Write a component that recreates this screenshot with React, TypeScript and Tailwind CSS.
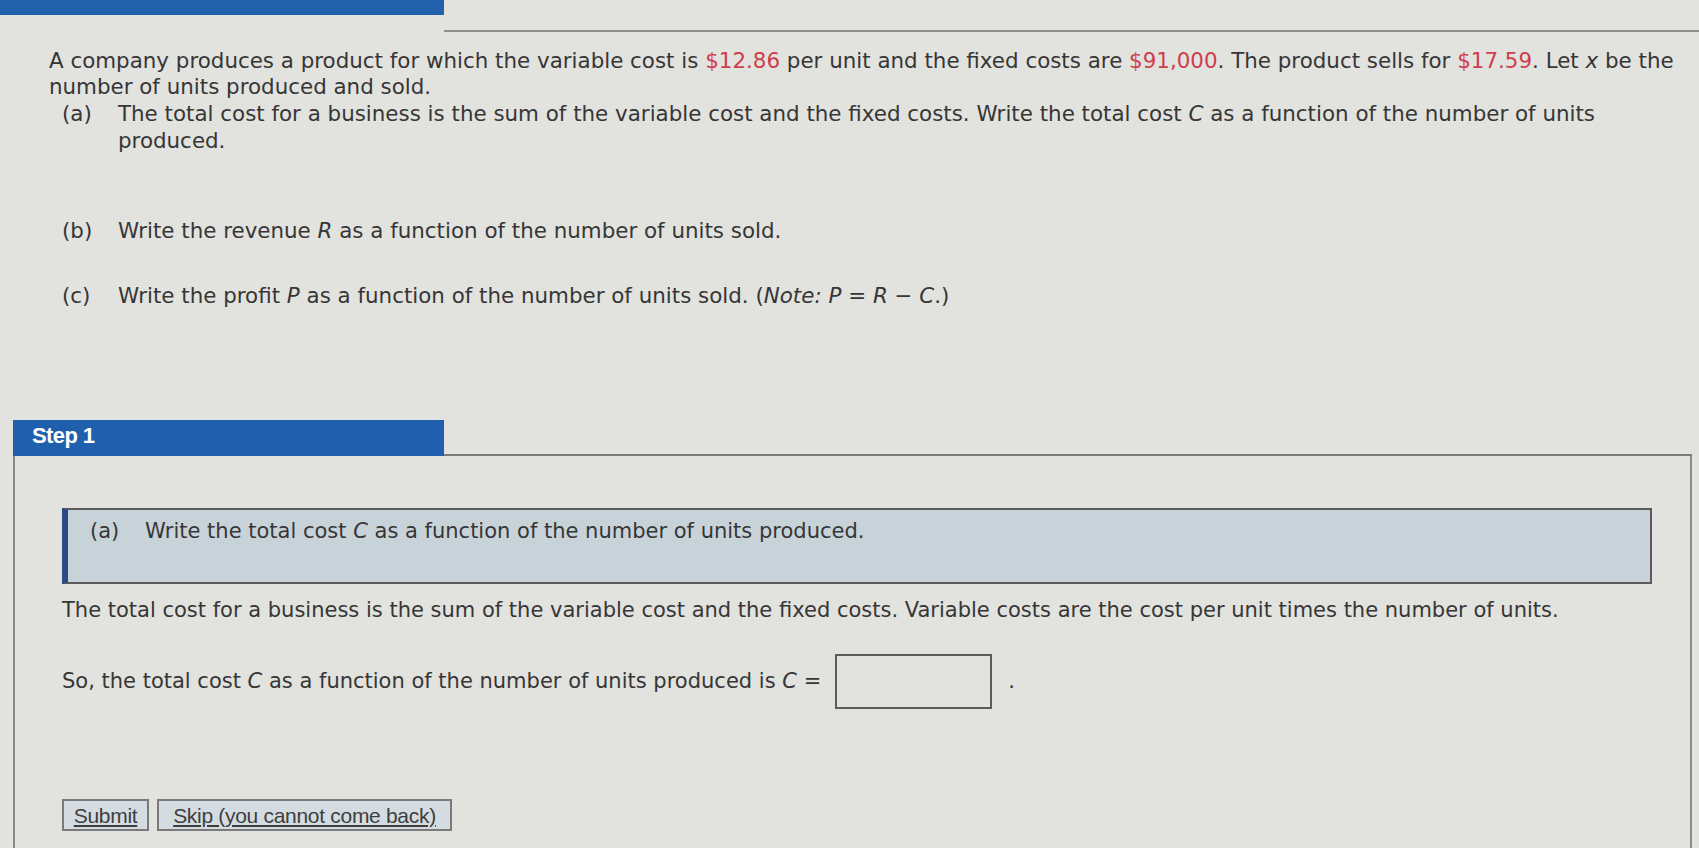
import React from "react";

const Red = ({ children }: { children: React.ReactNode }) => (
  <span className="text-[#cf3e4a]">{children}</span>
);

export default function App() {
  return (
    <div className="min-h-screen w-full overflow-hidden bg-[#e2e2de] font-['DejaVu_Sans',Verdana,sans-serif] text-[#363636]">
      {/* top header strip */}
      <div className="flex h-[32px]">
        <div className="h-[15px] w-[444px] bg-[#2262ad]" />
        <div className="flex-1 border-b-2 border-[#8c8c8c]" />
      </div>

      {/* problem statement */}
      <div className="pl-[49px] pr-[14px] pt-[16px] text-[21.4px]">
        <p className="leading-[26px]">
          A company produces a product for which the variable cost is <Red>$12.86</Red> per unit and the fixed
          costs are <Red>$91,000</Red>. The product sells for <Red>$17.59</Red>. Let <i>x</i> be the
          <br />
          number of units produced and sold.
        </p>
        <div className="flex leading-[27px]">
          <span className="w-[69px] shrink-0 pl-[13px]">(a)</span>
          <p className="pr-[80px]">
            The total cost for a business is the sum of the variable cost and the fixed costs. Write the total cost{" "}
            <i>C</i> as a function of the number of units
            <br />
            produced.
          </p>
        </div>
        <div className="mt-[63px] flex leading-[27px]">
          <span className="w-[69px] shrink-0 pl-[13px]">(b)</span>
          <p>
            Write the revenue <i>R</i> as a function of the number of units sold.
          </p>
        </div>
        <div className="mt-[38px] flex leading-[27px]">
          <span className="w-[69px] shrink-0 pl-[13px]">(c)</span>
          <p>
            Write the profit <i>P</i> as a function of the number of units sold. (<i>Note:</i> <i>P</i> = <i>R</i> −{" "}
            <i>C</i>.)
          </p>
        </div>
      </div>

      {/* Step 1 */}
      <div className="mt-[111px] pl-[13px] pr-[7px]">
        <div className="flex">
          <div className="flex h-[36px] w-[431px] items-center bg-[#1f5fae] pb-[6px] pl-[19px] font-['Liberation_Sans',Arial,sans-serif] text-[22px] font-bold tracking-[-0.6px] text-white">
            Step 1
          </div>
          <div className="flex-1 border-b-2 border-[#7c7c7c]" />
        </div>
        <div className="h-[420px] border-x-2 border-[#8a8a8a] pl-[47px] pr-[38px] pt-[52px] text-[21px] leading-[27px]">
          <div className="h-[76px] border-y-2 border-r-2 border-l-[6px] border-y-[#5a5a5a] border-r-[#5a5a5a] border-l-[#2b4a86] bg-[#c8d3d9] pt-[8px]">
            <div className="flex">
              <span className="w-[53px] shrink-0 pl-[22px]">(a)</span>
              <span className="pl-[24px]">
                Write the total cost <i>C</i> as a function of the number of units produced.
              </span>
            </div>
          </div>

          <p className="mt-[13px]">
            The total cost for a business is the sum of the variable cost and the fixed costs. Variable costs are the
            cost per unit times the number of units.
          </p>

          <div className="mt-[30px] flex items-center">
            <span>
              So, the total cost <i>C</i> as a function of the number of units produced is <i>C</i> =
            </span>
            <div className="ml-[14px] h-[55px] w-[157px] border-2 border-[#5c5c5c]" />
            <span className="ml-[16px]">.</span>
          </div>

          <div className="mt-[90px] flex gap-[8px] font-['Liberation_Sans',Arial,sans-serif] text-[21px] text-[#3e3e3e]">
            <button className="flex h-[32px] w-[87px] items-center justify-center border-2 border-[#7a7a7a] bg-[#d4dce1] tracking-[-0.3px] underline">
              Submit
            </button>
            <button className="flex h-[32px] w-[295px] items-center justify-center border-2 border-[#7a7a7a] bg-[#d4dce1] tracking-[-0.3px] underline">
              Skip (you cannot come back)
            </button>
          </div>
        </div>
      </div>
    </div>
  );
}
